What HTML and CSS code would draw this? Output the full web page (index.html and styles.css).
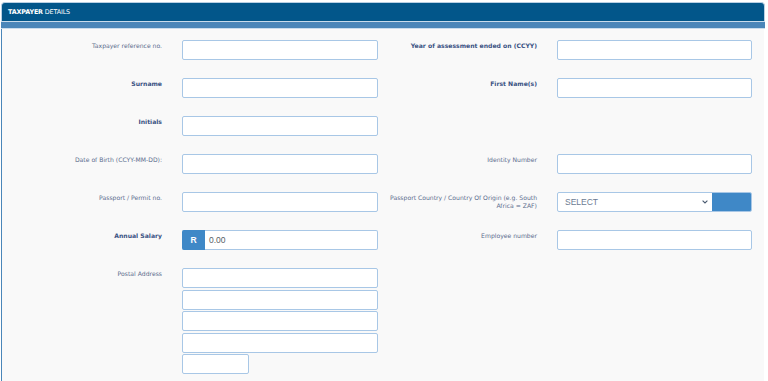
FILE: index.html
```html
<!DOCTYPE html>
<html>
<head>
<meta charset="utf-8">
<link rel="stylesheet" href="styles.css">
</head>
<body>
<div class="panel">
  <div class="panel-head"><b>TAXPAYER</b> DETAILS</div>
  <div class="panel-strip"></div>
  <div class="panel-body">
    <div class="form">
      <div class="lbl">Taxpayer reference no.</div>
      <div class="field"><div class="input"></div></div>
      <div class="lbl bold">Year of assessment ended on (CCYY)</div>
      <div class="field"><div class="input"></div></div>

      <div class="lbl bold">Surname</div>
      <div class="field"><div class="input"></div></div>
      <div class="lbl bold">First Name(s)</div>
      <div class="field"><div class="input"></div></div>

      <div class="lbl bold">Initials</div>
      <div class="field"><div class="input"></div></div>
      <div class="lbl"></div>
      <div class="field"></div>

      <div class="lbl">Date of Birth (CCYY-MM-DD):</div>
      <div class="field"><div class="input"></div></div>
      <div class="lbl">Identity Number</div>
      <div class="field"><div class="input"></div></div>

      <div class="lbl">Passport / Permit no.</div>
      <div class="field"><div class="input"></div></div>
      <div class="lbl">Passport Country / Country Of Origin (e.g. South Africa = ZAF)</div>
      <div class="field">
        <div class="select">
          <span class="select-text">SELECT</span>
          <svg class="chev" width="6" height="4" viewBox="0 0 6 4"><path d="M0.6 0.6 L3 3 L5.4 0.6" fill="none" stroke="#4a5a70" stroke-width="1.1"/></svg>
          <span class="select-btn"></span>
        </div>
      </div>

      <div class="lbl bold">Annual Salary</div>
      <div class="field">
        <div class="input money"><span class="addon">R</span><span class="val">0.00</span></div>
      </div>
      <div class="lbl">Employee number</div>
      <div class="field"><div class="input"></div></div>

      <div class="lbl">Postal Address</div>
      <div class="field stack">
        <div class="input"></div>
        <div class="input"></div>
        <div class="input"></div>
        <div class="input"></div>
        <div class="input short"></div>
      </div>
      <div class="lbl"></div>
      <div class="field"></div>
    </div>
  </div>
</div>
</body>
</html>
```

FILE: styles.css
```css
html, body {
  margin: 0;
  padding: 0;
  background: #ffffff;
  width: 768px;
  height: 381px;
  overflow: hidden;
  font-family: "DejaVu Sans", Verdana, sans-serif;
}

.panel {
  margin: 2px 0 0 1px;
  width: 764px;
}

.panel-head {
  height: 18px;
  background: #02568a;
  border: 1px solid #b9d0e4;
  border-bottom: none;
  border-radius: 4px 4px 0 0;
  color: #ffffff;
  font-size: 6.4px;
  line-height: 18px;
  padding-left: 6px;
  letter-spacing: -0.15px;
}

.panel-head b {
  font-weight: bold;
}

.panel-strip {
  height: 6px;
  background: #4a86b9;
  border-top: 1px solid #c9dcec;
  border-bottom: 1px solid #c9dcec;
}

.panel-body {
  background: #f9f9f9;
  border-left: 1px solid #4a86b9;
  height: 360px;
  padding-top: 11px;
  width: 762px;
}

.form {
  display: grid;
  grid-template-columns: 180px 196px 179px 195px;
  row-gap: 18px;
}

.lbl {
  text-align: right;
  padding-right: 20px;
  padding-left: 12px;
  padding-top: 2px;
  font-size: 6.1px;
  line-height: 7.5px;
  color: #5c6d8e;
}

.lbl.bold {
  font-weight: bold;
  color: #3a5283;
}

.field {
  min-height: 20px;
}

.input {
  box-sizing: border-box;
  height: 20px;
  background: #ffffff;
  border: 1px solid #a8c7e6;
  border-radius: 2px;
}

.stack {
  display: flex;
  flex-direction: column;
  gap: 1.5px;
}

.input.short {
  width: 67px;
}

.money {
  display: flex;
  align-items: center;
  border-left: none;
}

.addon {
  width: 23px;
  height: 20px;
  margin-top: -1px;
  margin-bottom: -1px;
  background: #3f88c7;
  color: #ffffff;
  font-family: "Liberation Sans", Arial, sans-serif;
  font-weight: bold;
  font-size: 8.5px;
  line-height: 20px;
  text-align: center;
  border-radius: 2px 0 0 2px;
}

.val {
  padding-left: 4px;
  font-family: "Liberation Sans", Arial, sans-serif;
  font-size: 8.5px;
  color: #555d66;
}

.select {
  box-sizing: border-box;
  height: 20px;
  display: flex;
  align-items: center;
  background: #ffffff;
  border: 1px solid #a8c7e6;
  border-radius: 2px;
  overflow: hidden;
}

.select-text {
  flex: 1;
  padding-left: 7px;
  font-family: "Liberation Sans", Arial, sans-serif;
  font-size: 8.5px;
  color: #6b7b92;
}

.chev {
  margin-right: 4px;
}

.select-btn {
  width: 39px;
  height: 20px;
  background: #3f88c7;
}
```
